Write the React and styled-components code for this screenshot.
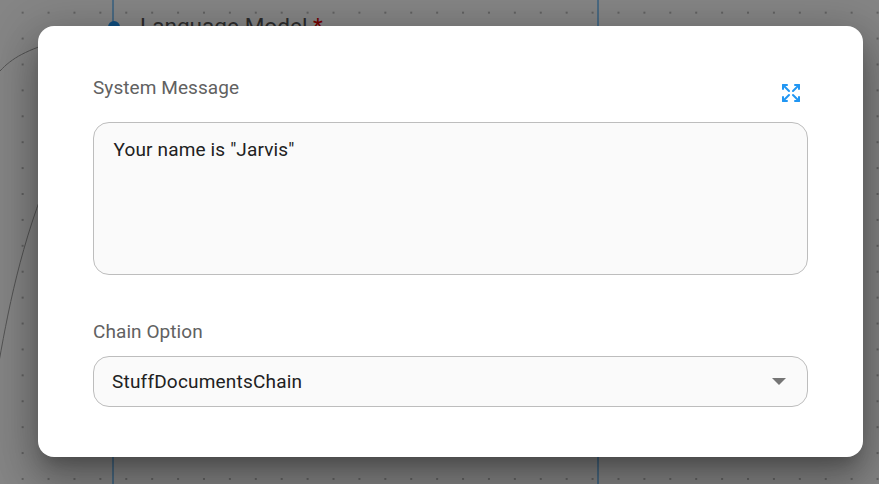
import React from 'react';
import styled, { createGlobalStyle } from 'styled-components';
import { TbArrowsMaximize } from 'react-icons/tb';

const GlobalStyle = createGlobalStyle`
html, body {
    margin: 0;
    padding: 0;
    height: 100%;
    overflow: hidden;
    font-family: Roboto, "Liberation Sans", sans-serif;
}
`;

const Backdrop = styled.div`
position: relative;
box-sizing: border-box;
width: 879px;
height: 484px;
overflow: hidden;
padding: 26px 16px 27px 38px;
background-color: #fff;
background-image: radial-gradient(circle, #bcbcbc 0.8px, transparent 1px);
background-size: 25.92px 25.92px;
background-position: 9.7px -0.3px;
`;

const Scrim = styled.div`
position: absolute;
inset: 0;
background: rgba(0, 0, 0, 0.48);
`;

const Edges = styled.svg`
position: absolute;
inset: 0;
`;

const NodeTitle = styled.div`
position: absolute;
left: 140px;
top: 13px;
font-size: 22.6px;
line-height: 28px;
color: #555;
span {
    color: #e00000;
}
`;

const NodeHandle = styled.div`
position: absolute;
left: 108px;
top: 21px;
width: 12px;
height: 12px;
border-radius: 50%;
background: #2196f3;
`;

const Modal = styled.div`
position: relative;
box-sizing: border-box;
height: 431px;
padding: 50px 55px 0;
background: #fff;
border-radius: 16px;
box-shadow: 0 11px 15px -7px rgba(0, 0, 0, 0.2), 0 24px 38px 3px rgba(0, 0, 0, 0.2), 0 9px 46px 8px rgba(0, 0, 0, 0.2);
`;

const Field = styled.div`
display: flex;
flex-direction: column;
margin-bottom: ${(props) => props.$gap || 0}px;
`;

const LabelRow = styled.div`
display: flex;
align-items: flex-start;
justify-content: space-between;
height: ${(props) => props.$height}px;
`;

const Label = styled.label`
font-size: 19px;
line-height: 24px;
letter-spacing: 0.07px;
color: #616161;
`;

const ExpandButton = styled.button`
display: flex;
padding: 0;
margin: 5px 5px 0 0;
border: 0;
background: none;
color: #2196f3;
`;

const MessageBox = styled.div`
box-sizing: border-box;
height: 153px;
padding: 15px 19.5px;
background: #fafafa;
border: 1px solid #bdbdbd;
border-radius: 16px;
font-size: 19px;
line-height: 24px;
letter-spacing: 0.15px;
color: #212121;
`;

const SelectBox = styled.div`
display: flex;
align-items: center;
justify-content: space-between;
box-sizing: border-box;
height: 51px;
padding: 0 21px 0 18px;
background: #fafafa;
border: 1px solid #bdbdbd;
border-radius: 16px;
font-size: 19px;
letter-spacing: 0.2px;
color: #212121;
`;

const Caret = styled.span`
width: 0;
height: 0;
border-left: 7px solid transparent;
border-right: 7px solid transparent;
border-top: 7px solid #757575;
`;

export default function App() {
    return (
        <Backdrop>
            <GlobalStyle />
            <Edges width="879" height="484" fill="none">
                <path d="M113 0V484M598 0V484" stroke="#2196f3" strokeWidth="1" />
                <path d="M0 71C12 58 26 50 60 40" stroke="#a0a0a0" strokeWidth="1" />
                <path d="M-1 362C10 300 24 230 60 150" stroke="#a0a0a0" strokeWidth="1" />
            </Edges>
            <NodeHandle />
            <NodeTitle>Language Model <span>*</span></NodeTitle>
            <Scrim />
            <Modal>
                <Field $gap={45}>
                    <LabelRow $height={46}>
                        <Label>System Message</Label>
                        <ExpandButton><TbArrowsMaximize size={24} /></ExpandButton>
                    </LabelRow>
                    <MessageBox>Your name is "Jarvis"</MessageBox>
                </Field>
                <Field>
                    <LabelRow $height={36}>
                        <Label>Chain Option</Label>
                    </LabelRow>
                    <SelectBox>
                        StuffDocumentsChain
                        <Caret />
                    </SelectBox>
                </Field>
            </Modal>
        </Backdrop>
    );
}
